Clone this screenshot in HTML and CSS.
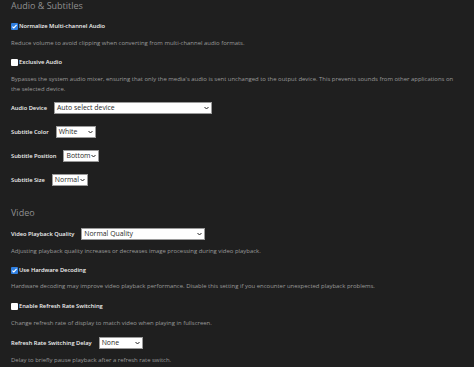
FILE: index.html
```html
<!DOCTYPE html>
<html>
<head>
<meta charset="utf-8">
<link rel="stylesheet" href="styles.css">
</head>
<body>
<div class="page">
  <h2 class="section first">Audio &amp; Subtitles</h2>

  <div class="check-row gap-a">
    <span class="cb checked"><svg viewBox="0 0 8 8" width="7" height="7"><path d="M1.6 4.1 L3.2 5.7 L6.4 2.2" fill="none" stroke="#fff" stroke-width="1.3"/></svg></span>
    <span class="label">Normalize Multi-channel Audio</span>
  </div>
  <p class="desc">Reduce volume to avoid clipping when converting from multi-channel audio formats.</p>

  <div class="check-row gap-b">
    <span class="cb"></span>
    <span class="label">Exclusive Audio</span>
  </div>
  <p class="desc wide">Bypasses the system audio mixer, ensuring that only the media's audio is sent unchanged to the output device. This prevents sounds from other applications on the selected device.</p>

  <div class="select-row first-select">
    <span class="label">Audio Device</span>
    <div class="select w-device"><span>Auto select device</span><svg viewBox="0 0 6 4" width="5" height="4"><path d="M0.6 0.8 L3 3.2 L5.4 0.8" fill="none" stroke="#222" stroke-width="1.2"/></svg></div>
  </div>
  <div class="select-row">
    <span class="label">Subtitle Color</span>
    <div class="select w-color"><span>White</span><svg viewBox="0 0 6 4" width="5" height="4"><path d="M0.6 0.8 L3 3.2 L5.4 0.8" fill="none" stroke="#222" stroke-width="1.2"/></svg></div>
  </div>
  <div class="select-row">
    <span class="label">Subtitle Position</span>
    <div class="select w-pos"><span>Bottom</span><svg viewBox="0 0 6 4" width="5" height="4"><path d="M0.6 0.8 L3 3.2 L5.4 0.8" fill="none" stroke="#222" stroke-width="1.2"/></svg></div>
  </div>
  <div class="select-row">
    <span class="label">Subtitle Size</span>
    <div class="select w-size"><span>Normal</span><svg viewBox="0 0 6 4" width="5" height="4"><path d="M0.6 0.8 L3 3.2 L5.4 0.8" fill="none" stroke="#222" stroke-width="1.2"/></svg></div>
  </div>

  <h2 class="section video">Video</h2>

  <div class="select-row after-head">
    <span class="label">Video Playback Quality</span>
    <div class="select w-quality"><span>Normal Quality</span><svg viewBox="0 0 6 4" width="5" height="4"><path d="M0.6 0.8 L3 3.2 L5.4 0.8" fill="none" stroke="#222" stroke-width="1.2"/></svg></div>
  </div>
  <p class="desc tight">Adjusting playback quality increases or decreases image processing during video playback.</p>

  <div class="check-row gap-b">
    <span class="cb checked"><svg viewBox="0 0 8 8" width="7" height="7"><path d="M1.6 4.1 L3.2 5.7 L6.4 2.2" fill="none" stroke="#fff" stroke-width="1.3"/></svg></span>
    <span class="label">Use Hardware Decoding</span>
  </div>
  <p class="desc hw">Hardware decoding may improve video playback performance. Disable this setting if you encounter unexpected playback problems.</p>

  <div class="check-row gap-c">
    <span class="cb"></span>
    <span class="label">Enable Refresh Rate Switching</span>
  </div>
  <p class="desc">Change refresh rate of display to match video when playing in fullscreen.</p>

  <div class="select-row after-desc">
    <span class="label">Refresh Rate Switching Delay</span>
    <div class="select w-delay"><span>None</span><svg viewBox="0 0 6 4" width="5" height="4"><path d="M0.6 0.8 L3 3.2 L5.4 0.8" fill="none" stroke="#222" stroke-width="1.2"/></svg></div>
  </div>
  <p class="desc last">Delay to briefly pause playback after a refresh rate switch.</p>
</div>
</body>
</html>
```

FILE: styles.css
```css
html, body {
  margin: 0;
  padding: 0;
  background: #1f1f1f;
}
body {
  font-family: "Open Sans", "Noto Sans", sans-serif;
  color: #e6e6e6;
  overflow: hidden;
  height: 367px;
}
.page {
  padding: 0 12px 0 11px;
  width: 451px;
}
.section {
  margin: 0;
  font-size: 9px;
  line-height: 11px;
  font-weight: 400;
  color: #8f8f8f;
}
.section.first { margin-top: 0; }
.section.video { margin-top: 21px; }

.check-row {
  display: flex;
  align-items: center;
  gap: 1px;
  height: 10px;
}
.gap-a { margin-top: 10px; }
.gap-b { margin-top: 9px; }
.gap-c { margin-top: 10px; }

.cb {
  width: 7px;
  height: 7px;
  background: #ffffff;
  border-radius: 1px;
  display: flex;
  align-items: center;
  justify-content: center;
  flex: none;
}
.cb.checked { background: #2f7fe0; }
.cb svg { display: block; }

.label {
  font-size: 5.75px;
  font-weight: 600;
  color: #f2f2f2;
  white-space: nowrap;
}
.desc {
  margin: 7px 0 0 0;
  font-size: 5.95px;
  line-height: 10px;
  color: #9a9a9a;
}
.desc.tight { margin-top: 6px; }
.desc.hw { margin-top: 6px; }
.desc.last { margin-top: 6px; }

.select-row {
  display: flex;
  align-items: center;
  gap: 7px;
  height: 12px;
  margin-top: 12px;
}
.select-row.first-select { margin-top: 8px; }
.select-row.after-head { margin-top: 10px; }
.select-row.after-desc { margin-top: 9px; }

.select {
  box-sizing: border-box;
  height: 12px;
  background: #ffffff;
  border: 1px solid #9a9a9a;
  display: flex;
  align-items: center;
  justify-content: space-between;
  padding: 0 2px 0 2px;
  font-size: 6.9px;
  color: #2a2a2a;
  flex: none;
}
.select span { white-space: nowrap; line-height: 10px; }
.select svg { display: block; flex: none; }
.w-device { width: 158px; }
.w-color { width: 40px; }
.w-pos { width: 36px; }
.w-size { width: 36px; }
.w-quality { width: 124px; }
.w-delay { width: 44px; }
```
